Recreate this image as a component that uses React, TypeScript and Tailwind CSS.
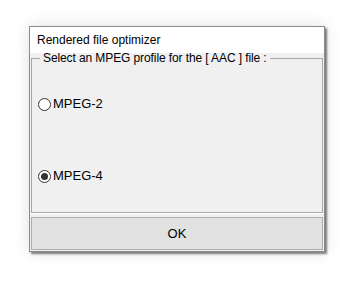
import React, { useState } from 'react';

const Radio: React.FC<{ label: string; checked: boolean; onSelect: () => void }> = ({ label, checked, onSelect }) => (
    <label className="flex items-center h-[20px] cursor-default" onClick={onSelect}>
        <span className="w-[13px] h-[13px] rounded-full border border-[#333] bg-white flex items-center justify-center">
            {checked && <span className="w-[7px] h-[7px] rounded-full bg-[#333]" />}
        </span>
        <span className="ml-[2px] text-[13px] leading-[20px] text-black">{label}</span>
    </label>
);

const App: React.FC = () => {
    const [profile, setProfile] = useState('MPEG-4');

    return (
        <div className="w-[362px] h-[284px] bg-white pl-[29px] pt-[26px]" style={{ fontFamily: '"Liberation Sans", Arial, sans-serif' }}>
            {/* Dialog window */}
            <div className="w-[296px] h-[226px] flex flex-col border border-[#8c8c8c] bg-[#f0f0f0] shadow-[2px_2px_2px_rgba(0,0,0,0.5),0_0_16px_rgba(0,0,0,0.12)]">
                {/* Title bar */}
                <div className="h-[26px] bg-white flex items-center pl-[7px] text-[12px] text-black">
                    Rendered file optimizer
                </div>

                {/* Group box */}
                <fieldset className="mx-[1px] h-[160px] border border-[#a8a8a8] shadow-[0_1px_0_#fff] pl-[6px]">
                    <legend className="ml-[2px] px-[3px] text-[12px] tracking-[-0.1px] text-black leading-[11px]">
                        Select an MPEG profile for the [ AAC ] file :
                    </legend>
                    <div className="flex flex-col gap-[52px] pt-[30px]">
                        <Radio label="MPEG-2" checked={profile === 'MPEG-2'} onSelect={() => setProfile('MPEG-2')} />
                        <Radio label="MPEG-4" checked={profile === 'MPEG-4'} onSelect={() => setProfile('MPEG-4')} />
                    </div>
                </fieldset>

                {/* OK button */}
                <div className="flex-1 flex items-end px-[1px] pb-[1px]">
                    <button className="w-full h-[33px] bg-[#e1e1e1] border border-[#adadad] text-[13px] text-black">
                        OK
                    </button>
                </div>
            </div>
        </div>
    );
};

export default App;
